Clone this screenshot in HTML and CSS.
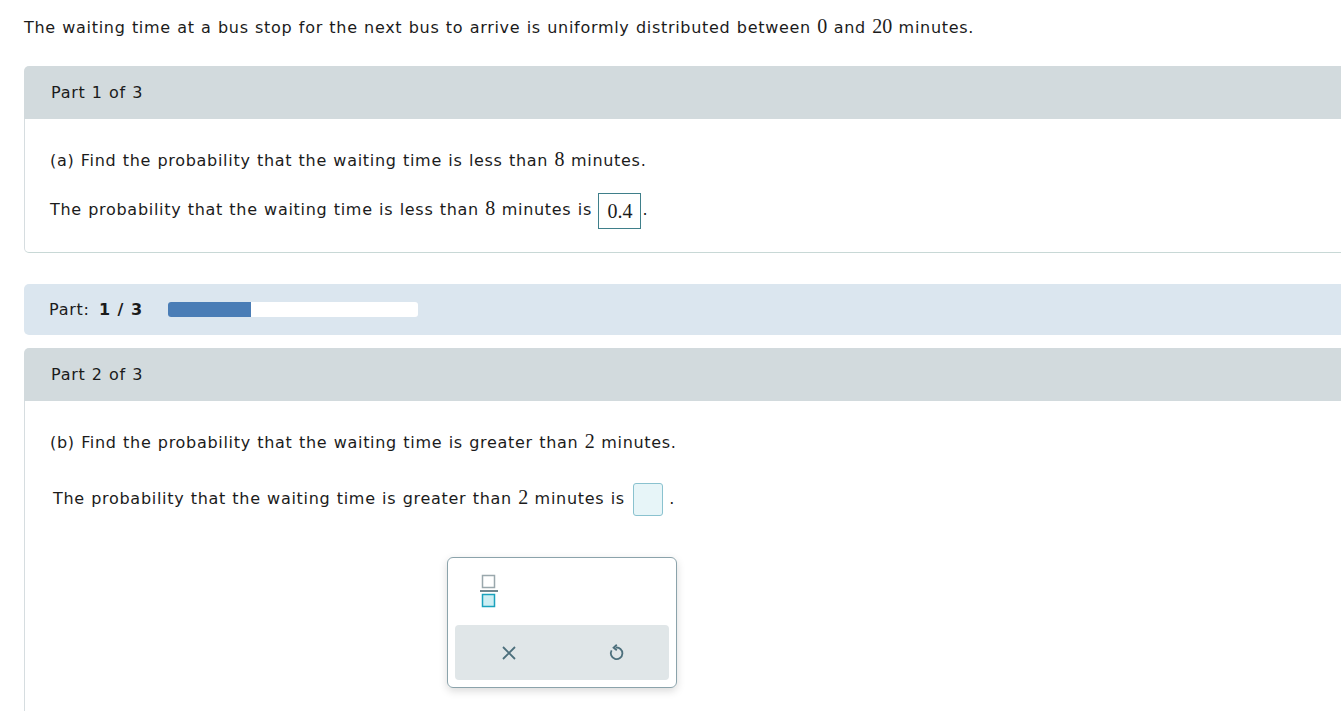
FILE: index.html
```html
<!DOCTYPE html>
<html lang="en">
  <head>
    <meta charset="UTF-8" />
    <meta name="viewport" content="width=device-width, initial-scale=1.0" />
    <title>Uniform Distribution</title>
    <link rel="stylesheet" href="styles.css">
  </head>
  <body>
    <div class="page">
      <p class="intro">
        The waiting time at a bus stop for the next bus to arrive is uniformly distributed between
        <span class="num">0</span> and <span class="num">20</span> minutes.
      </p>

      <div class="card">
        <div class="cardHeader">Part 1 of 3</div>
        <div class="cardBody done">
          <p class="question">(a) Find the probability that the waiting time is less than <span class="num">8</span> minutes.</p>
          <p class="answer">
            The probability that the waiting time is less than <span class="num">8</span> minutes is
            <span class="answerBox">0.4</span>.
          </p>
        </div>
      </div>

      <div class="progress">
        <span>Part: <b>1 / 3</b></span>
        <div class="track"><div class="fill" style="width: 33.3%"></div></div>
      </div>

      <div class="card">
        <div class="cardHeader">Part 2 of 3</div>
        <div class="cardBody open">
          <p class="question">(b) Find the probability that the waiting time is greater than <span class="num">2</span> minutes.</p>
          <p class="answer second">
            The probability that the waiting time is greater than <span class="num">2</span> minutes is
            <span class="emptyBox"></span><span class="dot">.</span>
          </p>

          <div class="palette">
            <div class="tools">
              <svg width="18" height="36" viewBox="0 0 18 36">
                <rect x="2.5" y="2.5" width="12" height="12" fill="#fff" stroke="#9aa8ad" stroke-width="1.5" />
                <rect x="0" y="17" width="18" height="2" fill="#6e8790" />
                <rect x="2.5" y="21.5" width="12" height="12" fill="#cdeef3" stroke="#1aa2bd" stroke-width="1.5" />
              </svg>
            </div>
            <div class="actions">
              <svg width="16" height="16" viewBox="0 0 16 16">
                <path d="M2 2 L14 14 M14 2 L2 14" stroke="#4c6f7c" stroke-width="1.8" fill="none" />
              </svg>
              <svg width="18" height="18" viewBox="0 0 18 18">
                <path d="M4.6 6.4 A5.8 5.8 0 1 0 8.6 3.6" stroke="#4c6f7c" stroke-width="1.8" fill="none" />
                <path d="M9.8 0.8 L6.6 3.6 L9.8 6.2" stroke="#4c6f7c" stroke-width="1.8" fill="none" />
              </svg>
            </div>
          </div>
        </div>
      </div>
    </div>
  </body>
</html>
```

FILE: styles.css
```css
/* Reset some default styles */
html,
body,
p {
  margin: 0;
  padding: 0;
}

html,
body {
  overflow: hidden;
  height: 100%;
}

body {
  font-family: "DejaVu Sans", Verdana, sans-serif;
  font-size: 16px;
  letter-spacing: 0.7px;
  word-spacing: 0.6px;
  color: #1b1b1b;
  background-color: #fff;
}

.page {
  width: 1360px;
  padding-left: 24px;
}

.num {
  font-family: "Liberation Serif", "Times New Roman", serif;
  font-size: 20px;
  letter-spacing: 0;
}

.intro {
  padding-top: 15px;
  line-height: 22px;
  margin-bottom: 27px;
}

/* Part cards */
.card {
  border-radius: 5px 0 0 5px;
  margin-bottom: 13px;
}

.cardHeader {
  background-color: #d2dadd;
  height: 53px;
  line-height: 53px;
  padding-left: 27px;
  border-radius: 5px 0 0 0;
}

.cardBody {
  border: 1px solid #d6dde0;
  border-top: none;
  border-right: none;
  padding-left: 25px;
}

.cardBody.done {
  height: 133px;
  border-bottom: 1px solid #c8d8d6;
  border-radius: 0 0 0 5px;
  margin-bottom: 31px;
}

.cardBody.open {
  height: 310px;
  border-bottom: none;
}

.question {
  padding-top: 29px;
  line-height: 22px;
}

.answer {
  margin-top: 18px;
  line-height: 36px;
}

.answerBox {
  display: inline-block;
  vertical-align: middle;
  font-family: "Liberation Serif", "Times New Roman", serif;
  font-size: 20px;
  letter-spacing: 0;
  border: 1px solid #3f7f8a;
  padding: 0 8px;
  height: 34px;
  line-height: 34px;
  margin-right: 1px;
}

.answer.second {
  margin-top: 25px;
  padding-left: 3px;
}

.emptyBox {
  display: inline-block;
  vertical-align: middle;
  width: 28px;
  height: 31px;
  border: 1px solid #8ac2cf;
  border-radius: 3px;
  background-color: #e7f5f8;
  margin-left: 2px;
}

.dot {
  margin-left: 6px;
}

/* Progress strip */
.progress {
  background-color: #dbe6ef;
  height: 51px;
  display: flex;
  align-items: center;
  padding-left: 25px;
  border-radius: 5px 0 0 5px;
  margin-bottom: 13px;
}

.progress b {
  margin-left: 3px;
}

.track {
  width: 250px;
  height: 15px;
  background-color: #fff;
  border-radius: 3px;
  margin-left: 25px;
  overflow: hidden;
}

.fill {
  height: 100%;
  background-color: #4a7db6;
}

/* Math palette */
.palette {
  width: 230px;
  height: 131px;
  margin-top: 40px;
  margin-left: 397px;
  border: 1px solid #8ba3ab;
  border-radius: 6px;
  box-shadow: 0 3px 8px rgba(0, 0, 0, 0.15);
  padding: 0 7px;
  box-sizing: border-box;
  letter-spacing: 0;
}

.tools {
  height: 67px;
  padding-left: 25px;
  padding-top: 15px;
  box-sizing: border-box;
}

.actions {
  background-color: #e0e6e8;
  height: 55px;
  border-radius: 4px;
  display: flex;
  align-items: center;
  justify-content: space-between;
  padding: 0 44px 0 46px;
}
```
